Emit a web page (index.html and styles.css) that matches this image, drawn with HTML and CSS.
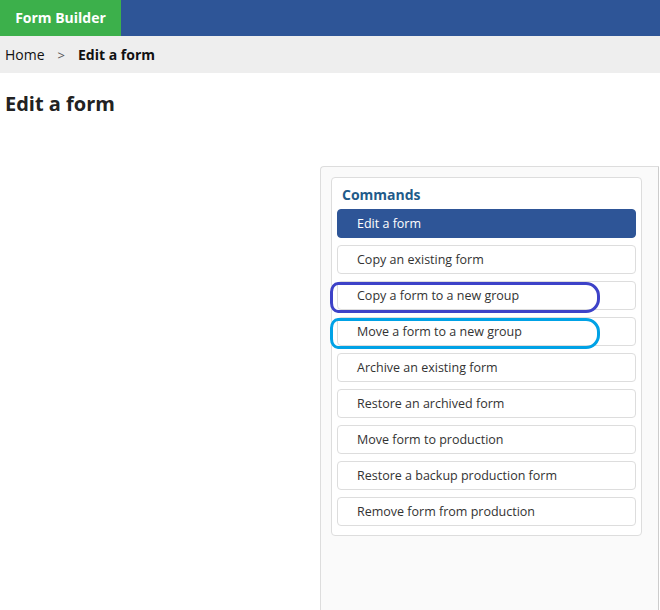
FILE: index.html
```html
<!DOCTYPE html>
<html lang="en">
<head>
  <meta charset="UTF-8" />
  <title>Form Builder</title>
  <link rel="stylesheet" href="styles.css">
</head>
<body>

  <div class="topbar">
    <div class="brand">Form Builder</div>
  </div>
  <div class="crumbs">
    <span>Home</span>
    <span class="sep">&gt;</span>
    <b>Edit a form</b>
  </div>
  <h1>Edit a form</h1>

  <div class="layout">
    <div class="side">
      <div class="card">
        <h3>Commands</h3>
        <div class="cmd active">Edit a form</div>
        <div class="cmd">Copy an existing form</div>
        <div class="cmd">Copy a form to a new group</div>
        <div class="cmd">Move a form to a new group</div>
        <div class="cmd">Archive an existing form</div>
        <div class="cmd">Restore an archived form</div>
        <div class="cmd">Move form to production</div>
        <div class="cmd">Restore a backup production form</div>
        <div class="cmd last">Remove form from production</div>
        <!-- hand-drawn highlights -->
        <div class="mark mark-copy"></div>
        <div class="mark mark-move"></div>
      </div>
    </div>
  </div>

</body>
</html>
```

FILE: styles.css
```css
body {
  margin: 0;
  font-family: "Open Sans", "Noto Sans", sans-serif;
  background: #fff;
  color: #333;
}

.topbar {
  height: 36px;
  background: #2e5597;
  display: flex;
}

.brand {
  width: 121px;
  background: #3cb04b;
  color: #fff;
  font-weight: bold;
  font-size: 14px;
  line-height: 36px;
  text-align: center;
}

.crumbs {
  height: 37px;
  background: #eee;
  display: flex;
  align-items: center;
  gap: 12px;
  padding-left: 5px;
  font-size: 14px;
  color: #111;
}

.crumbs .sep {
  color: #555;
  font-size: 13px;
  margin: 0 1px;
}

h1 {
  margin: 18px 0 0 5px;
  font-size: 20px;
  font-weight: bold;
  color: #222;
  line-height: 26px;
}

.layout {
  display: flex;
  padding-left: 320px;
  margin-top: 49px;
}

.side {
  flex: 1;
  height: 445px;
  background: #fafafa;
  border: 1px solid #ddd;
  border-right-color: #ccc;
  border-radius: 4px 0 0 0;
  margin-right: 1px;
  padding: 10px 16px 0 10px;
}

.card {
  position: relative;
  background: #fff;
  border: 1px solid #ddd;
  border-radius: 4px;
  padding: 8px 5px 9px 5px;
}

.card h3 {
  margin: 0 0 5px 5px;
  font-size: 14px;
  color: #1f5b8a;
  line-height: 18px;
}

.cmd {
  height: 27px;
  line-height: 27px;
  border: 1px solid #ddd;
  border-radius: 4px;
  padding-left: 19px;
  font-size: 12.5px;
  color: #333;
  margin-bottom: 7px;
}

.cmd.last {
  margin-bottom: 0;
}

.cmd.active {
  background: #2e5597;
  border-color: #2e5597;
  color: #fff;
}

.mark {
  position: absolute;
  left: -2px;
  width: 264px;
  height: 25px;
  border: 3px solid;
  border-radius: 8px 14px 14px 8px / 10px 14px 14px 10px;
}

.mark-copy {
  top: 104px;
  border-color: #3d42c8;
}

.mark-move {
  top: 140px;
  border-color: #00a2e6;
}
```
